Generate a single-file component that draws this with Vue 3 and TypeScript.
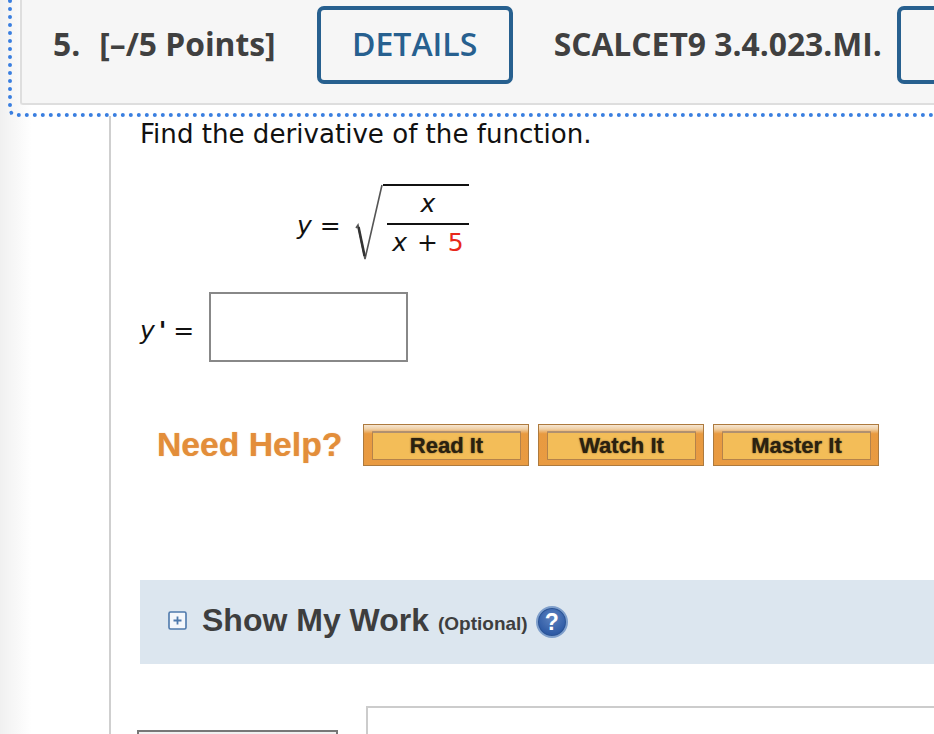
<template>
  <div class="page">
    <div class="question">
      <header class="q-head">
        <span class="q-num">5.</span>
        <span class="q-points">[–/5 Points]</span>
        <button class="head-btn">DETAILS</button>
        <span class="q-code">SCALCET9 3.4.023.MI.</span>
        <button class="head-btn head-btn--cut"></button>
      </header>
    </div>
    <div class="focus-ring"></div>

    <main class="q-body">
      <p class="prompt">Find the derivative of the function.</p>

      <div class="formula">
        <span class="lhs"><i>y</i> =</span>
        <span class="radical">
          <svg class="radical-sign" width="34" height="80" viewBox="0 0 34 80">
            <path d="M1 44 L3 41 L10 75 L27 1" fill="none" stroke="#555" stroke-width="1.6" />
            <path d="M3.5 43 L9.6 72" fill="none" stroke="#333" stroke-width="2.6" />
          </svg>
          <span class="radicand">
            <span class="numer"><i>x</i></span>
            <span class="denom"><i>x</i> + <span class="red">5</span></span>
          </span>
        </span>
      </div>

      <div class="answer">
        <span class="answer-label"><i>y</i> <i class="prime">'</i> =</span>
        <input class="answer-input" type="text" />
      </div>

      <div class="help">
        <span class="help-title">Need Help?</span>
        <button v-for="b in helpButtons" :key="b" class="help-btn">
          <span class="help-btn-in"><span class="help-btn-text">{{ b }}</span></span>
        </button>
      </div>

      <section class="work">
        <svg class="plus" width="19" height="19" viewBox="0 0 19 19">
          <rect x="1" y="1" width="17" height="17" rx="1.5" fill="#f4f7fb" stroke="#4e79ac" stroke-width="1.6" />
          <path d="M9.5 5.5 V13.5 M5.5 9.5 H13.5" stroke="#4e79ac" stroke-width="1.8" />
        </svg>
        <span class="work-title">Show My Work</span>
        <span class="work-opt">(Optional)</span>
        <span class="qmark">?</span>
      </section>

      <div class="bottom-row">
        <div class="box-left"></div>
        <div class="box-right"></div>
      </div>
    </main>
  </div>
</template>

<script setup lang="ts">
const helpButtons: string[] = ["Read It", "Watch It", "Master It"];
</script>

<style>
html,
body {
  margin: 0;
  background: #fff;
  overflow: hidden;
}
</style>

<style scoped>
.page {
  position: relative;
  width: 934px;
  height: 734px;
  overflow: hidden;
  background: linear-gradient(to right, #f0f0f0 0, #f5f5f5 10px, #fff 32px);
  font-family: "DejaVu Sans", sans-serif;
}

.question {
  padding-left: 20px;
}

.q-head {
  display: flex;
  align-items: center;
  width: 1000px;
  height: 105px;
  padding: 0 0 14px 31px;
  box-sizing: border-box;
  background: #f6f6f6;
  border-left: 2px solid #dedede;
  border-bottom: 2px solid #dedede;
  border-bottom-left-radius: 3px;
  font-family: "Open Sans", sans-serif;
  font-weight: 700;
  font-size: 31.8px;
  color: #404040;
  white-space: nowrap;
}

.q-num,
.q-points,
.q-code {
  margin-bottom: 3px;
}

.q-points {
  margin-left: 19px;
}

.head-btn {
  flex: none;
  width: 196px;
  height: 78px;
  margin-left: 41px;
  padding: 0 0 2px;
  box-sizing: border-box;
  background: #f6f6f6;
  border: 4px solid #27608f;
  border-radius: 7px;
  font-family: "Open Sans", sans-serif;
  font-weight: 600;
  font-size: 32px;
  color: #27608f;
}

.q-code {
  margin-left: 41px;
}

.head-btn--cut {
  margin-left: 15px;
}

.focus-ring {
  position: absolute;
  left: 8px;
  top: -10px;
  width: 1000px;
  height: 127px;
  box-sizing: border-box;
  border-left: 4px dotted #3a7fe0;
  border-bottom: 4px dotted #3a7fe0;
  border-bottom-left-radius: 8px;
  pointer-events: none;
}

.q-body {
  height: 629px;
  margin-left: 109px;
  padding-left: 29px;
  border-left: 2px solid #cfcfcf;
  box-sizing: border-box;
}

.prompt {
  margin: 11px 0 0;
  font-size: 26.1px;
  line-height: 36px;
  color: #111;
}

.formula {
  display: flex;
  align-items: center;
  margin-top: 32px;
  padding-left: 157px;
  font-size: 25px;
  color: #111;
}

.lhs {
  width: 58px;
  white-space: nowrap;
  margin-top: 3px;
}

.radical {
  display: flex;
}

.radical-sign {
  margin-right: -1px;
  flex: none;
}

.radicand {
  display: flex;
  flex-direction: column;
  width: 86px;
  height: 80px;
  margin-left: -5px;
  text-align: center;
  box-sizing: border-box;
  border-top: 2px solid #111;
}

.numer {
  height: 37px;
  line-height: 36px;
  margin-left: 4px;
  border-bottom: 2px solid #111;
}

.denom {
  margin-left: 4px;
  line-height: 36px;
  white-space: nowrap;
  word-spacing: 2px;
}

.red {
  color: #e8281a;
}

.answer {
  display: flex;
  align-items: center;
  margin-top: 28px;
  font-size: 25px;
  color: #111;
}

.answer-label {
  width: 69px;
  white-space: nowrap;
  margin-top: 6px;
  word-spacing: -1px;
}

.prime {
  margin-left: -3px;
  font-weight: 700;
}

.answer-input {
  width: 199px;
  height: 70px;
  box-sizing: border-box;
  border: 2px solid #888;
  background: #fff;
  padding: 0;
}

.help {
  display: flex;
  align-items: center;
  gap: 9px;
  margin-top: 62px;
  margin-left: 17px;
}

.help-title {
  width: 197px;
  margin-top: -2px;
  font-family: "Liberation Sans", sans-serif;
  font-weight: 700;
  font-size: 33.7px;
  color: #e38e3a;
  white-space: nowrap;
  text-shadow: 0 0 1px rgba(227, 142, 58, 0.7);
}

.help-btn {
  display: block;
  flex: none;
  width: 166px;
  height: 42px;
  padding: 6px 7px 5px 8px;
  box-sizing: border-box;
  border: 1px solid #ad7a3e;
  background: linear-gradient(to bottom, #f6e6d2 0, #f0d0a6 10%, #e89a40 22%, #e99b42 100%);
}

.help-btn-in {
  display: flex;
  align-items: center;
  justify-content: center;
  height: 100%;
  box-sizing: border-box;
  background: #f3bd58;
  border: 1px solid #b5824a;
  border-top: 2px solid #b09070;
  border-radius: 1px;
}

.help-btn-text {
  font-family: "Liberation Sans", sans-serif;
  font-weight: 700;
  font-size: 22px;
  color: #2a2110;
  text-shadow: 0 0 1.5px rgba(30, 23, 9, 0.8);
}

.work {
  display: flex;
  align-items: center;
  width: 794px;
  height: 84px;
  margin-top: 114px;
  padding-left: 28px;
  box-sizing: border-box;
  background: #dce6ef;
  font-family: "Liberation Sans", sans-serif;
  font-weight: 700;
  color: #3e3e3e;
  white-space: nowrap;
}

.plus {
  flex: none;
  margin-right: 15px;
  margin-top: -4px;
}

.work-title {
  font-size: 32px;
  margin-top: -3px;
}

.work-opt {
  font-size: 19px;
  margin-left: 9px;
  margin-top: 3px;
}

.qmark {
  flex: none;
  display: flex;
  align-items: center;
  justify-content: center;
  width: 32px;
  height: 32px;
  margin-left: 8px;
  border-radius: 50%;
  box-sizing: border-box;
  border: 2px solid #7f9fcb;
  background: radial-gradient(circle at 50% 35%, #5d83c0 0, #2f5ba5 70%);
  box-shadow: inset 0 0 0 1px #2c5494;
  color: #fff;
  font-size: 23px;
}

.bottom-row {
  display: flex;
  align-items: flex-start;
  margin-top: 42px;
  margin-left: -3px;
}

.box-left {
  flex: none;
  width: 201px;
  height: 40px;
  margin-top: 24px;
  box-sizing: border-box;
  background: #f0f0f0;
  border: 2px solid #777;
}

.box-right {
  flex: none;
  width: 700px;
  height: 60px;
  margin-left: 28px;
  box-sizing: border-box;
  background: #fff;
  border: 2px solid #ccc;
}
</style>
